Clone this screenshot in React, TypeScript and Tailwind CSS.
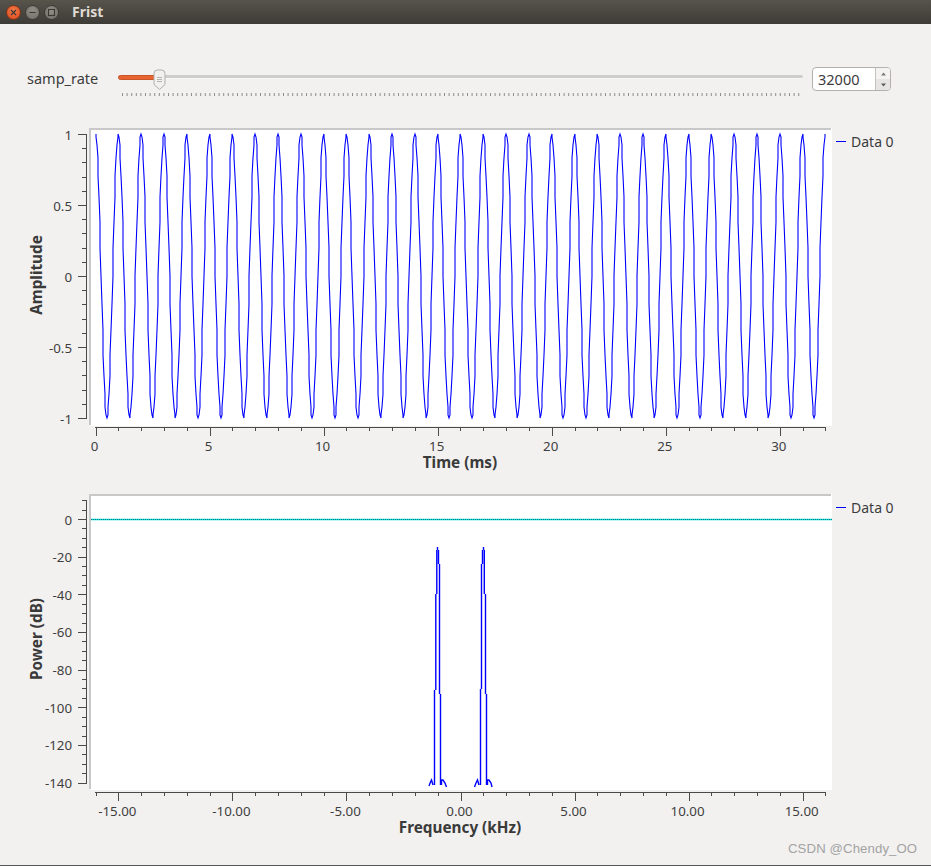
import React from "react";

const range = (a: number, b: number, s = 1) => {
  const r: number[] = [];
  for (let v = a; s > 0 ? v <= b + 1e-9 : v >= b - 1e-9; v += s) r.push(v);
  return r;
};

const XT = (v: number) => 95.5 + 22.81 * v;
const XF = (v: number) => 460.5 + 22.81 * v;

const wave = range(0, 1024)
  .map((i) => {
    const t = i / 32;
    return `${Math.round(95.5 + 22.81 * t)},${Math.round(277 - 142 * Math.cos(2 * Math.PI * t))}`;
  })
  .join(" ");

const AX = "#4a4a4a";
const labelCls = "fill-[#3f3f3f] text-[13.3px]";
const titleCls = "fill-[#3a3a3a] text-[15.3px] font-bold";

function Canvas({ top, bottom }: { top: number; bottom: number }) {
  return (
    <g>
      <rect x={90} y={top} width={742} height={bottom - top} fill="#ffffff" />
      <rect x={89} y={top} width={2} height={bottom - top - 1} fill="#c8c8c8" />
      <rect x={89} y={top} width={742} height={2} fill="#c8c8c8" />
    </g>
  );
}

function TimePlot() {
  const yOf = (v: number) => 277 - 142 * v;
  return (
    <svg viewBox="0 125 832 350" className="w-[832px] h-[350px] shrink-0">
      <Canvas top={129} bottom={427} />
      <polyline points={wave} fill="none" stroke="#0000ff" strokeWidth={1.1} />
      <path d="M86.5 135V419" stroke={AX} strokeWidth={1} />
      {range(-10, 10).map((i) => {
        const major = i % 5 === 0;
        const y = Math.round(yOf(i / 10)) + 0.5;
        return <path key={i} d={`M${major ? 78 : 82} ${y}H87`} stroke={AX} strokeWidth={1} />;
      })}
      {[
        ["1", 1],
        ["0.5", 0.5],
        ["0", 0],
        ["-0.5", -0.5],
        ["-1", -1],
      ].map(([t, v]) => (
        <text key={t as string} x={72} y={yOf(v as number) + 5.5} textAnchor="end" className={labelCls}>
          {t}
        </text>
      ))}
      <path d="M95 428.5H825" stroke={AX} strokeWidth={1} />
      {range(0, 32).map((i) => {
        const x = Math.round(XT(i)) + 0.5;
        return <path key={i} d={`M${x} 428V${i % 5 === 0 ? 437 : 432}`} stroke={AX} strokeWidth={1} />;
      })}
      {range(0, 30, 5).map((v) => (
        <text key={v} x={XT(v) - 1} y={452} textAnchor="middle" className={labelCls}>
          {v}
        </text>
      ))}
      <text x={460} y={469} textAnchor="middle" className={titleCls}>
        Time (ms)
      </text>
      <text transform="translate(41.5 276) rotate(-90)" textAnchor="middle" className={titleCls}>
        Amplitude
      </text>
    </svg>
  );
}

function FreqPlot() {
  const yDb = (v: number) => 520 - 1.883 * v;
  const leftPeak =
    "M437.5 548V551M436.8 551V595M438.5 551V565M439.5 565V695M435.8 595V691M434.5 691V786M440.5 695V786" +
    "M429 787L430.5 783L431.5 781L433 786M441.5 786V781L443 781L445 784L446.5 788";
  const rightPeak =
    "M483.5 548V551M484.3 551V595M482.5 551V565M481.5 565V690M485.5 595V695M480.5 690V786M486.5 695V786" +
    "M474.5 788L476 784L477.5 781L479 786M487.5 786V781L489 781L491 784L492 788";
  return (
    <svg viewBox="0 490 832 350" className="w-[832px] h-[350px] shrink-0">
      <Canvas top={495} bottom={791} />
      <path d="M91 520.5H832" stroke="#00dede" strokeWidth={1.5} />
      <path d="M91 520.5H832" stroke="#005050" strokeWidth={0.7} strokeDasharray="1 1" />
      <path d={leftPeak + rightPeak} fill="none" stroke="#0000ff" strokeWidth={1.4} />
      <path d="M86.5 501V784" stroke={AX} strokeWidth={1} />
      {range(-140, 10, 5).map((v) => {
        const major = v % 20 === 0;
        const y = Math.round(yDb(v)) + 0.5;
        return <path key={v} d={`M${major ? 78 : 82} ${y}H87`} stroke={AX} strokeWidth={1} />;
      })}
      {range(-140, 0, 20).map((v) => (
        <text key={v} x={72} y={yDb(v) + 5.5} textAnchor="end" className={labelCls}>
          {v}
        </text>
      ))}
      <path d="M95 793.5H825" stroke={AX} strokeWidth={1} />
      {range(-16, 16).map((i) => {
        const x = Math.round(XF(i)) + 0.5;
        return <path key={i} d={`M${x} 793V${i % 5 === 0 ? 802 : 797}`} stroke={AX} strokeWidth={1} />;
      })}
      {range(-15, 15, 5).map((v) => (
        <text key={v} x={XF(v) - 1} y={817} textAnchor="middle" className={labelCls}>
          {v.toFixed(2)}
        </text>
      ))}
      <text x={460} y={834} textAnchor="middle" className={titleCls}>
        Frequency (kHz)
      </text>
      <text transform="translate(41.5 640) rotate(-90)" textAnchor="middle" className={titleCls}>
        Power (dB)
      </text>
    </svg>
  );
}

function Legend({ mt }: { mt: string }) {
  return (
    <div className={`flex items-center h-5 ml-1 gap-[5px] ${mt}`}>
      <span className="w-[10px] h-px bg-[#0000ff]" />
      <span className="text-[14px] text-[#3c3c3c]">Data 0</span>
    </div>
  );
}

function WinButton({ kind }: { kind: "close" | "min" | "max" }) {
  const bg =
    kind === "close"
      ? "bg-[radial-gradient(circle_at_50%_35%,#f47a4a,#d9481c)] border-[#7a3418]"
      : "bg-[radial-gradient(circle_at_50%_35%,#928f88,#6f6c65)] border-[#3b3a36]";
  return (
    <div className={`w-[15px] h-[15px] rounded-full border flex items-center justify-center ${bg}`}>
      <svg width="9" height="9" viewBox="0 0 9 9" fill="none" stroke="#3a3833" strokeWidth="1.1">
        {kind === "close" && <path d="M2 2L7 7M7 2L2 7" />}
        {kind === "min" && <path d="M1.5 4.5H7.5" />}
        {kind === "max" && <rect x="1.5" y="1.5" width="6" height="6" />}
      </svg>
    </div>
  );
}

function Slider() {
  return (
    <div className="relative w-[685px] h-6 shrink-0">
      <div className="absolute left-0 right-0 top-[8px] h-[4px] rounded-full bg-[#cfcdca] border-b border-[#f8f8f7]" />
      <div className="absolute left-0 w-[40px] top-[8px] h-[5px] rounded-l-full bg-[#e8642f] border border-[#c9552a]" />
      <svg width="13" height="22" viewBox="0 0 13 22" className="absolute left-[34.5px] top-[1.5px]">
        <path
          d="M1 4.5Q1 1 4.5 1H8.5Q12 1 12 4.5V15.5L6.5 20.5L1 15.5Z"
          fill="#f1f0ef"
          stroke="#b0aea9"
          strokeWidth="1"
        />
        <path d="M4 8.5H9M4 10.5H9M4 12.5H9" stroke="#a8a6a2" strokeWidth="0.8" />
      </svg>
    </div>
  );
}

function SpinBox() {
  return (
    <div className="w-[79px] h-6 ml-[9px] flex bg-white border border-[#b4b1aa] rounded-[4px] overflow-hidden shrink-0">
      <div className="flex-1 pl-[5px] text-[14.5px] leading-[22px] text-[#3c3c3c]">32000</div>
      <div className="w-[15px] border-l border-[#c4c2bd] flex flex-col">
        <div className="flex-1 bg-[#f4f3f2] flex items-center justify-center">
          <svg width="7" height="4" viewBox="0 0 7 4">
            <path d="M3.5 0.5L6 3.5H1Z" fill="#7c7c7c" />
          </svg>
        </div>
        <div className="flex-1 bg-[#e6e5e3] flex items-center justify-center">
          <svg width="7" height="4" viewBox="0 0 7 4">
            <path d="M3.5 3.5L6 0.5H1Z" fill="#5c5c5c" />
          </svg>
        </div>
      </div>
    </div>
  );
}

export default function App() {
  return (
    <div className="relative w-[931px] h-[866px] overflow-hidden bg-[#f2f1f0] border-b border-[#5a5a5a] font-['Noto_Sans',sans-serif]">
      <header className="h-6 flex items-center bg-[linear-gradient(#57544c,#3d3b36)] pl-[6px]">
        <div className="flex gap-1">
          <WinButton kind="close" />
          <WinButton kind="min" />
          <WinButton kind="max" />
        </div>
        <span className="ml-[13px] -mt-[2px] text-[14px] font-bold text-[#dfdbd2]">Frist</span>
      </header>

      <div className="flex items-center pt-[43px] pl-[27px]">
        <span className="w-[91px] text-[14.5px] text-[#3c3c3c]">samp_rate</span>
        <Slider />
        <SpinBox />
      </div>
      <svg width="678" height="3" className="ml-[122px] mt-[2px] block">
        {range(0, 147).map((i) => (
          <rect key={i} x={(i * 4.6).toFixed(1)} y="0" width="1" height="3" fill="#8f8d89" />
        ))}
      </svg>

      <div className="flex mt-[28px]">
        <TimePlot />
        <Legend mt="mt-[7px]" />
      </div>
      <div className="flex mt-[15px]">
        <FreqPlot />
        <Legend mt="mt-[8px]" />
      </div>

      <span className="absolute left-[788px] top-[841px] text-[13.2px] leading-4 tracking-[0.1px] text-[#a3a3a3] font-['Liberation_Sans',sans-serif]">
        CSDN @Chendy_OO
      </span>
    </div>
  );
}
